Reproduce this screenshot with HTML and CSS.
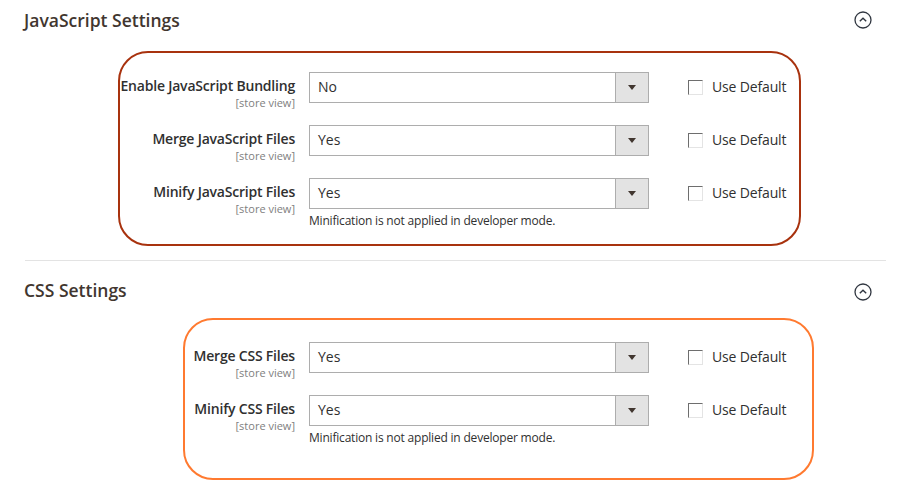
FILE: index.html
```html
<!DOCTYPE html>
<html lang="en">
<head>
    <meta charset="UTF-8">
    <title>Developer Settings</title>
    <link rel="stylesheet" href="styles.css">
</head>
<body>
    <div class="page">
        <div class="group">
            <div class="group-head">
                <div class="group-title">JavaScript Settings</div>
                <span class="collapse-icon">
                    <svg width="18" height="18" viewBox="0 0 18 18"><circle cx="9" cy="9" r="8" fill="none" stroke="#303640" stroke-width="1.3"/><path d="M5.8 10.3 L9 7.3 L12.2 10.3" fill="none" stroke="#303640" stroke-width="1.4"/></svg>
                </span>
            </div>
            <div class="marked marked-js">
                <div class="field-row">
                    <div class="field-label"><span class="label-text">Enable JavaScript Bundling</span><span class="scope">[store view]</span></div>
                    <div class="field-control">
                        <div class="select"><span class="select-value">No</span><span class="select-btn"><span class="arrow"></span></span></div>
                    </div>
                    <div class="use-default"><span class="checkbox"></span>Use Default</div>
                </div>
                <div class="field-row">
                    <div class="field-label"><span class="label-text">Merge JavaScript Files</span><span class="scope">[store view]</span></div>
                    <div class="field-control">
                        <div class="select"><span class="select-value">Yes</span><span class="select-btn"><span class="arrow"></span></span></div>
                    </div>
                    <div class="use-default"><span class="checkbox"></span>Use Default</div>
                </div>
                <div class="field-row">
                    <div class="field-label"><span class="label-text">Minify JavaScript Files</span><span class="scope">[store view]</span></div>
                    <div class="field-control">
                        <div class="select"><span class="select-value">Yes</span><span class="select-btn"><span class="arrow"></span></span></div>
                        <div class="note">Minification is not applied in developer mode.</div>
                    </div>
                    <div class="use-default"><span class="checkbox"></span>Use Default</div>
                </div>
            </div>
        </div>

        <div class="divider"></div>

        <div class="group group-css">
            <div class="group-head">
                <div class="group-title">CSS Settings</div>
                <span class="collapse-icon">
                    <svg width="18" height="18" viewBox="0 0 18 18"><circle cx="9" cy="9" r="8" fill="none" stroke="#303640" stroke-width="1.3"/><path d="M5.8 10.3 L9 7.3 L12.2 10.3" fill="none" stroke="#303640" stroke-width="1.4"/></svg>
                </span>
            </div>
            <div class="marked marked-css">
                <div class="field-row">
                    <div class="field-label"><span class="label-text">Merge CSS Files</span><span class="scope">[store view]</span></div>
                    <div class="field-control">
                        <div class="select"><span class="select-value">Yes</span><span class="select-btn"><span class="arrow"></span></span></div>
                    </div>
                    <div class="use-default"><span class="checkbox"></span>Use Default</div>
                </div>
                <div class="field-row">
                    <div class="field-label"><span class="label-text">Minify CSS Files</span><span class="scope">[store view]</span></div>
                    <div class="field-control">
                        <div class="select"><span class="select-value">Yes</span><span class="select-btn"><span class="arrow"></span></span></div>
                        <div class="note">Minification is not applied in developer mode.</div>
                    </div>
                    <div class="use-default"><span class="checkbox"></span>Use Default</div>
                </div>
            </div>
        </div>
    </div>
</body>
</html>
```

FILE: styles.css
```css
body {
    margin: 0;
    font-family: 'Open Sans', 'Noto Sans', sans-serif;
    background: #fff;
    color: #303030;
}
.page {
    padding: 0 22px 0 25px;
}
.group-head {
    height: 40px;
    display: flex;
    align-items: center;
    justify-content: space-between;
    padding-right: 14px;
}
.group-title {
    font-size: 17.5px;
    font-weight: 600;
    color: #41362f;
    margin-left: -1px;
}
.collapse-icon {
    display: flex;
    width: 18px;
    height: 18px;
}
.group-css .group-head {
    margin-top: 9px;
}
.group-css .collapse-icon {
    margin-top: 4px;
}
.marked {
    box-sizing: border-box;
    border: 2px solid #a8320e;
    border-radius: 30px;
}
.marked-js {
    margin: 11px 0 0 93px;
    width: 683px;
    padding: 19px 0 15px;
}
.marked-css {
    margin: 8px 0 0 158px;
    width: 631px;
    padding: 22px 0 32px;
    border-color: #ff7a30;
}
.field-row {
    display: flex;
    align-items: flex-start;
}
.field-row + .field-row {
    margin-top: 15px;
}
.field-label {
    display: flex;
    flex-direction: column;
    align-items: flex-end;
    text-align: right;
    padding-top: 4px;
    margin-right: 14px;
    white-space: nowrap;
}
.marked-js .field-label {
    width: 175px;
}
.marked-css .field-label {
    width: 110px;
}
.label-text {
    font-size: 14px;
    font-weight: 600;
    line-height: 19px;
    letter-spacing: -0.2px;
}
.scope {
    font-size: 11px;
    line-height: 15px;
    color: #808080;
}
.field-control {
    width: 340px;
}
.select {
    box-sizing: border-box;
    height: 31px;
    border: 1px solid #adadad;
    display: flex;
    align-items: center;
    background: #fff;
}
.select-value {
    flex: 1;
    padding-left: 8px;
    font-size: 14px;
    line-height: 18px;
    margin-top: -2px;
}
.select-btn {
    width: 32px;
    height: 100%;
    border-left: 1px solid #adadad;
    background: #e3e3e3;
    display: flex;
    align-items: center;
    justify-content: center;
}
.arrow {
    width: 0;
    height: 0;
    border-left: 4px solid transparent;
    border-right: 4px solid transparent;
    border-top: 5px solid #41362f;
}
.note {
    font-size: 12px;
    line-height: 16px;
    margin-top: 4px;
    letter-spacing: -0.2px;
}
.use-default {
    display: flex;
    align-items: center;
    margin-left: 39px;
    height: 29px;
    font-size: 14px;
    letter-spacing: -0.15px;
    white-space: nowrap;
}
.checkbox {
    box-sizing: border-box;
    width: 15px;
    height: 15px;
    border: 1px solid;
    border-color: #6e6e6e #e4e4e4 #e4e4e4 #6e6e6e;
    margin-right: 9px;
    margin-top: 2px;
}
.divider {
    height: 1px;
    background: #e3e3e3;
    margin-top: 14px;
}
```
